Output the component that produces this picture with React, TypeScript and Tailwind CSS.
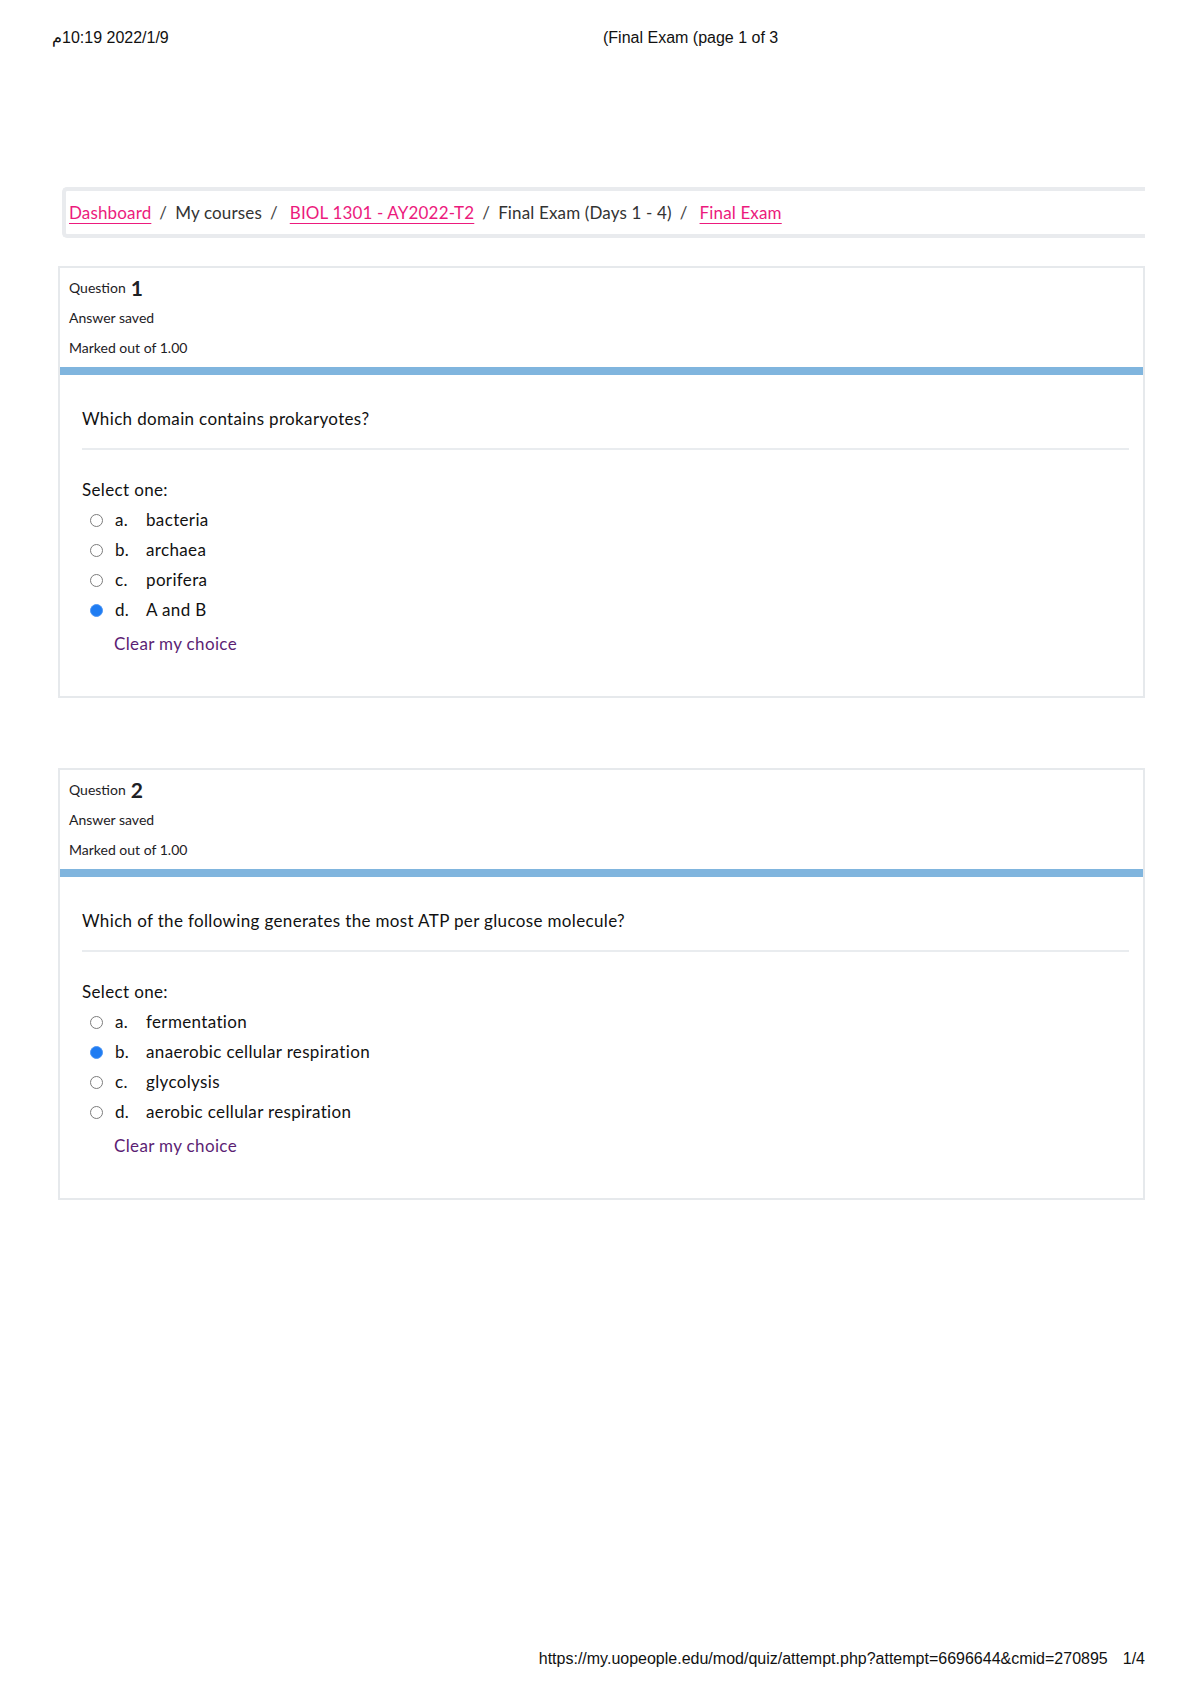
import React from "react";

type Opt = { l: string; t: string; checked?: boolean };

const body = { fontFamily: "Lato, 'Open Sans', sans-serif" };
const arial = { fontFamily: "'Liberation Sans', Arial, sans-serif" };

function Radio({ checked }: { checked?: boolean }) {
  return checked ? (
    <span className="w-[13px] h-[13px] rounded-full bg-[#1f7cf2] border border-[#4d96f5] shrink-0" />
  ) : (
    <span className="w-[13px] h-[13px] rounded-full bg-white border border-[#7c7c7c] shrink-0" />
  );
}

function QuestionBox({ n, q, opts }: { n: number; q: string; opts: Opt[] }) {
  return (
    <div className="ml-[58px] w-[1087px] border-2 border-[#e6e9ec] bg-white" style={body}>
      <div className="pt-[4px] pb-[5px] pl-[9px] text-[14px] text-[#1d2125]">
        <div className="h-[30px] flex items-center">
          <span>Question</span>
          <span className="ml-[5px] text-[21px] font-bold leading-none">{n}</span>
        </div>
        <div className="h-[30px] flex items-center">Answer saved</div>
        <div className="h-[30px] flex items-center">Marked out of 1.00</div>
      </div>
      <div className="h-[8px] bg-[#80b5de]" />
      <div className="pl-[22px] pr-[14px] pt-[32px] pb-[40px] text-[17px] tracking-[0.35px] text-[#111]">
        <div className="h-[24px] flex items-center">{q}</div>
        <div className="mt-[17px] h-[2px] bg-[#e9ecef]" />
        <div className="mt-[28px] h-[24px] flex items-center">Select one:</div>
        <div className="mt-[3px]">
          {opts.map((o) => (
            <div key={o.l} className="h-[30px] flex items-center">
              <span className="ml-[8px] flex items-center">
                <Radio checked={o.checked} />
              </span>
              <span className="ml-[12px] w-[31px]">{o.l}</span>
              <span>{o.t}</span>
            </div>
          ))}
        </div>
        <div className="mt-[7px] ml-[32px] h-[24px] flex items-center text-[#5c1e74]">Clear my choice</div>
      </div>
    </div>
  );
}

export default function App() {
  return (
    <div className="w-[1200px] h-[1698px] bg-white flex flex-col text-black">
      <div className="pt-[28px] h-[48px] flex text-[16px] leading-[20px] text-[#111]" style={arial}>
        <div className="w-[603px] pl-[52px]">
          <bdi>م</bdi>
          <bdi>10:19 2022/1/9</bdi>
        </div>
        <div>(Final Exam (page 1 of 3</div>
      </div>

      <div
        className="mt-[139px] ml-[62px] w-[1083px] h-[51px] border-y-4 border-l-4 border-[#e9ebee] rounded-l-[5px] flex items-center pl-[3px] text-[17px] tracking-[0.15px] text-[#333]"
        style={body}
      >
        <span className="text-[#ec1a7d] underline underline-offset-[4px] decoration-[#ec1a7d]">Dashboard</span>
        <span className="mx-[8px] text-[#444]">/</span>
        <span>My courses</span>
        <span className="mx-[8px] text-[#444]">/</span>
        <span className="ml-[4px] text-[#ec1a7d] underline underline-offset-[4px] decoration-[#ec1a7d]">BIOL 1301 - AY2022-T2</span>
        <span className="mx-[8px] text-[#444]">/</span>
        <span>Final Exam (Days 1 - 4)</span>
        <span className="mx-[8px] text-[#444]">/</span>
        <span className="ml-[4px] text-[#ec1a7d] underline underline-offset-[4px] decoration-[#ec1a7d]">Final Exam</span>
      </div>

      <div className="mt-[28px]">
        <QuestionBox
          n={1}
          q="Which domain contains prokaryotes?"
          opts={[
            { l: "a.", t: "bacteria" },
            { l: "b.", t: "archaea" },
            { l: "c.", t: "porifera" },
            { l: "d.", t: "A and B", checked: true },
          ]}
        />
      </div>

      <div className="mt-[70px]">
        <QuestionBox
          n={2}
          q="Which of the following generates the most ATP per glucose molecule?"
          opts={[
            { l: "a.", t: "fermentation" },
            { l: "b.", t: "anaerobic cellular respiration", checked: true },
            { l: "c.", t: "glycolysis" },
            { l: "d.", t: "aerobic cellular respiration" },
          ]}
        />
      </div>

      <div className="mt-auto pb-[29px] pr-[55px] flex justify-end gap-[15px] text-[16px] leading-[20px] text-[#111]" style={arial}>
        <span>https://my.uopeople.edu/mod/quiz/attempt.php?attempt=6696644&amp;cmid=270895</span>
        <span>1/4</span>
      </div>
    </div>
  );
}
